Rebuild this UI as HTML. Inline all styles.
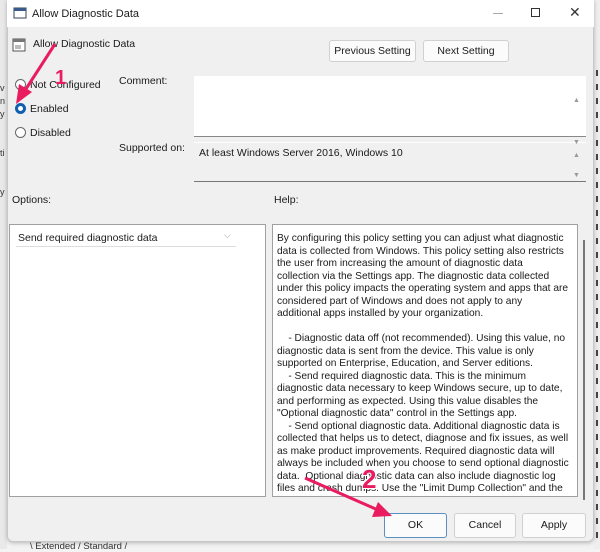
<!DOCTYPE html>
<html><head><style>
*{margin:0;padding:0;box-sizing:border-box}
body{width:600px;height:549px;overflow:hidden;background:#f3f3f3;font-family:"Liberation Sans",sans-serif;font-size:10.5px;color:#1a1a1a;position:relative}
.a{position:absolute}
.dlg{left:7px;top:0;width:587px;height:542px;background:#f0f0f0;border:1px solid #c8c8c8;border-radius:0 0 6px 6px;box-shadow:0 1px 4px rgba(0,0,0,.25)}
.tb{left:7px;top:0;width:587px;height:27px;background:#fff}
.btn{position:absolute;background:#fbfbfb;border:1px solid #d0d0d0;border-radius:3px;text-align:center;font-size:10.5px}
.box{position:absolute;background:#fff;border:1px solid #a0a0a0}
.rad{position:absolute;width:11px;height:11px;border:1px solid #666;border-radius:50%;background:#fff}
.help{left:272px;top:224px;width:306px;height:273px;padding:8px 4px 0 4px;line-height:12.5px;font-size:10.2px;overflow:hidden;white-space:nowrap}
</style></head><body>
<div class="a" style="left:0;top:0;width:7px;height:549px;background:#e9e9e9"></div>
<div class="a" style="left:0;top:82px;font-size:9px;color:#333;line-height:13px">v<br>n<br>y<br><br><br>ti<br><br><br>y</div>
<div class="a" style="left:30px;top:541px;font-size:9.5px;color:#333">\ Extended / Standard /</div>
<div class="a" style="left:594px;top:0;width:6px;height:549px;background:#eee"></div>
<div class="a" style="left:596px;top:70px;width:2px;height:470px;background:repeating-linear-gradient(#444 0 6px,transparent 6px 14px)"></div>
<div class="a dlg"></div>
<div class="a tb"></div>
<svg class="a" style="left:13px;top:7px" width="14" height="12"><rect x="1" y="1" width="12" height="10" fill="#fff" stroke="#345"/><rect x="1" y="1" width="12" height="3" fill="#3a5a8a"/></svg>
<div class="a" style="left:32px;top:8px;font-size:11px">Allow Diagnostic Data</div>
<div class="a" style="left:493px;top:13px;width:10px;height:1px;background:#aaa"></div>
<div class="a" style="left:531px;top:8px;width:9px;height:9px;border:1px solid #333"></div>
<div class="a" style="left:569px;top:4px;font-size:14px;color:#333">✕</div>
<svg class="a" style="left:12px;top:38px" width="14" height="14"><rect x="1" y="1" width="12" height="12" fill="#fff" stroke="#555"/><rect x="1" y="1" width="12" height="3" fill="#777"/><rect x="3" y="7" width="6" height="4" fill="#bbb"/></svg>
<div class="a" style="left:33px;top:38px;font-size:10.5px">Allow Diagnostic Data</div>
<div class="btn" style="left:329px;top:40px;width:87px;height:22px;line-height:20px">Previous Setting</div>
<div class="btn" style="left:423px;top:40px;width:86px;height:22px;line-height:20px">Next Setting</div>
<div class="rad" style="left:15px;top:79px"></div>
<div class="a" style="left:30px;top:79px">Not Configured</div>
<div class="rad" style="left:15px;top:103px;border:3.5px solid #1060b0"></div>
<div class="a" style="left:30px;top:103px">Enabled</div>
<div class="rad" style="left:15px;top:127px"></div>
<div class="a" style="left:30px;top:127px">Disabled</div>
<div class="a" style="left:119px;top:75px">Comment:</div>
<div class="box" style="left:194px;top:76px;width:392px;height:61px;border:none;border-bottom:1px solid #888"></div>
<div class="a" style="left:119px;top:142px">Supported on:</div>
<div class="box" style="left:194px;top:142px;width:392px;height:40px;background:#f0f0f0;border:none;border-bottom:1px solid #777;border-top:1px solid #fff"></div>
<div class="a" style="left:199px;top:147px">At least Windows Server 2016, Windows 10</div>
<div class="a" style="left:573px;top:80px;font-size:7px;color:#999;line-height:42px">▲<br>▼</div>
<div class="a" style="left:573px;top:146px;font-size:7px;color:#999;line-height:20px">▲<br>▼</div>
<div class="a" style="left:12px;top:194px">Options:</div>
<div class="a" style="left:274px;top:194px">Help:</div>
<div class="box" style="left:9px;top:224px;width:257px;height:273px"></div>
<div class="a" style="left:18px;top:232px">Send required diagnostic data</div>
<div class="a" style="left:16px;top:246px;width:220px;height:1px;background:#ddd"></div>
<div class="a" style="left:224px;top:230px;font-size:9px;color:#999">⌵</div>
<div class="box help">By configuring this policy setting you can adjust what diagnostic<br>data is collected from Windows. This policy setting also restricts<br>the user from increasing the amount of diagnostic data<br>collection via the Settings app. The diagnostic data collected<br>under this policy impacts the operating system and apps that are<br>considered part of Windows and does not apply to any<br>additional apps installed by your organization.<br><br>&nbsp;&nbsp;&nbsp;&nbsp;- Diagnostic data off (not recommended). Using this value, no<br>diagnostic data is sent from the device. This value is only<br>supported on Enterprise, Education, and Server editions.<br>&nbsp;&nbsp;&nbsp;&nbsp;- Send required diagnostic data. This is the minimum<br>diagnostic data necessary to keep Windows secure, up to date,<br>and performing as expected. Using this value disables the<br>"Optional diagnostic data" control in the Settings app.<br>&nbsp;&nbsp;&nbsp;&nbsp;- Send optional diagnostic data. Additional diagnostic data is<br>collected that helps us to detect, diagnose and fix issues, as well<br>as make product improvements. Required diagnostic data will<br>always be included when you choose to send optional diagnostic<br>data.&nbsp; Optional diagnostic data can also include diagnostic log<br>files and crash dumps. Use the "Limit Dump Collection" and the</div>
<div class="a" style="left:583px;top:240px;width:2px;height:260px;background:#777"></div>
<div class="btn" style="left:384px;top:513px;width:63px;height:25px;line-height:23px;border-color:#5a8fc0">OK</div>
<div class="btn" style="left:454px;top:513px;width:62px;height:25px;line-height:23px">Cancel</div>
<div class="btn" style="left:522px;top:513px;width:64px;height:25px;line-height:23px">Apply</div>
<svg class="a" style="left:0;top:0" width="600" height="549">
<line x1="55" y1="44" x2="24" y2="92" stroke="#e81c5e" stroke-width="3"/>
<polygon points="16,104 19,84 32,92" fill="#e81c5e"/>
<text x="55" y="84" font-family="Liberation Sans" font-weight="bold" font-size="20" fill="#e81c5e">1</text>
<line x1="305" y1="478" x2="378" y2="510" stroke="#e81c5e" stroke-width="3"/>
<polygon points="392,516 372,517 378,502" fill="#e81c5e"/>
<text x="362" y="488" font-family="Liberation Sans" font-weight="bold" font-size="26" fill="#e81c5e" stroke="#fff" stroke-width="2" paint-order="stroke">2</text>
</svg>
</body></html>
